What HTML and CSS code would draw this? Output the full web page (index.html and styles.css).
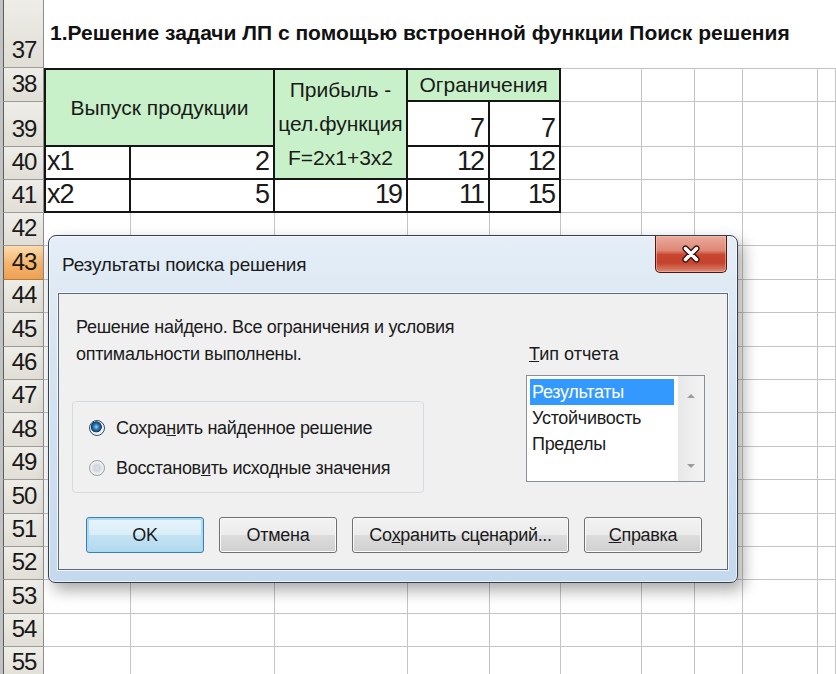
FILE: index.html
```html
<!DOCTYPE html>
<html lang="ru">
<head>
<meta charset="utf-8">
<title>Поиск решения</title>
<link rel="stylesheet" href="styles.css">
</head>
<body>
<div class="sheet">
  <div class="rh">37</div>
  <div class="title">1.Решение задачи ЛП с помощью встроенной функции Поиск решения</div>

  <div class="rh">38</div>
  <div class="t tt tl g hd span2 rows2">Выпуск продукции</div>
  <div class="t tt g hd rows3">Прибыль -<br>цел.функция<br>F=2x1+3x2</div>
  <div class="t tt g hd span2">Ограничения</div>
  <div class="c top"></div><div class="c top"></div><div class="c top"></div><div class="c top"></div><div class="c top"></div>

  <div class="rh">39</div>
  <div class="t num">7</div><div class="t num">7</div>
  <div class="c"></div><div class="c"></div><div class="c"></div><div class="c"></div><div class="c"></div>

  <div class="rh">40</div>
  <div class="t tl lab">x1</div><div class="t num">2</div>
  <div class="t num">12</div><div class="t num">12</div>
  <div class="c"></div><div class="c"></div><div class="c"></div><div class="c"></div><div class="c"></div>

  <div class="rh">41</div>
  <div class="t tl lab">x2</div><div class="t num">5</div><div class="t num">19</div>
  <div class="t num">11</div><div class="t num">15</div>
  <div class="c"></div><div class="c"></div><div class="c"></div><div class="c"></div><div class="c"></div>

  <div class="rh">42</div><div class="c"></div><div class="c"></div><div class="c"></div><div class="c"></div><div class="c"></div><div class="c"></div><div class="c"></div><div class="c"></div><div class="c"></div><div class="c"></div>
  <div class="rh sel">43</div><div class="c"></div><div class="c"></div><div class="c"></div><div class="c"></div><div class="c"></div><div class="c"></div><div class="c"></div><div class="c"></div><div class="c"></div><div class="c"></div>
  <div class="rh">44</div><div class="c"></div><div class="c"></div><div class="c"></div><div class="c"></div><div class="c"></div><div class="c"></div><div class="c"></div><div class="c"></div><div class="c"></div><div class="c"></div>
  <div class="rh">45</div><div class="c"></div><div class="c"></div><div class="c"></div><div class="c"></div><div class="c"></div><div class="c"></div><div class="c"></div><div class="c"></div><div class="c"></div><div class="c"></div>
  <div class="rh">46</div><div class="c"></div><div class="c"></div><div class="c"></div><div class="c"></div><div class="c"></div><div class="c"></div><div class="c"></div><div class="c"></div><div class="c"></div><div class="c"></div>
  <div class="rh">47</div><div class="c"></div><div class="c"></div><div class="c"></div><div class="c"></div><div class="c"></div><div class="c"></div><div class="c"></div><div class="c"></div><div class="c"></div><div class="c"></div>
  <div class="rh">48</div><div class="c"></div><div class="c"></div><div class="c"></div><div class="c"></div><div class="c"></div><div class="c"></div><div class="c"></div><div class="c"></div><div class="c"></div><div class="c"></div>
  <div class="rh">49</div><div class="c"></div><div class="c"></div><div class="c"></div><div class="c"></div><div class="c"></div><div class="c"></div><div class="c"></div><div class="c"></div><div class="c"></div><div class="c"></div>
  <div class="rh">50</div><div class="c"></div><div class="c"></div><div class="c"></div><div class="c"></div><div class="c"></div><div class="c"></div><div class="c"></div><div class="c"></div><div class="c"></div><div class="c"></div>
  <div class="rh">51</div><div class="c"></div><div class="c"></div><div class="c"></div><div class="c"></div><div class="c"></div><div class="c"></div><div class="c"></div><div class="c"></div><div class="c"></div><div class="c"></div>
  <div class="rh">52</div><div class="c"></div><div class="c"></div><div class="c"></div><div class="c"></div><div class="c"></div><div class="c"></div><div class="c"></div><div class="c"></div><div class="c"></div><div class="c"></div>
  <div class="rh">53</div><div class="c"></div><div class="c"></div><div class="c"></div><div class="c"></div><div class="c"></div><div class="c"></div><div class="c"></div><div class="c"></div><div class="c"></div><div class="c"></div>
  <div class="rh">54</div><div class="c"></div><div class="c"></div><div class="c"></div><div class="c"></div><div class="c"></div><div class="c"></div><div class="c"></div><div class="c"></div><div class="c"></div><div class="c"></div>
  <div class="rh">55</div><div class="c"></div><div class="c"></div><div class="c"></div><div class="c"></div><div class="c"></div><div class="c"></div><div class="c"></div><div class="c"></div><div class="c"></div><div class="c"></div>
</div>

<div class="dlg">
  <div class="cap">Результаты поиска решения</div>
  <div class="close">
    <svg width="20" height="18" viewBox="0 0 20 18"><path d="M4.5 3.5 L15.5 14.5 M15.5 3.5 L4.5 14.5" stroke="#3b1510" stroke-width="6.2" stroke-linecap="round" fill="none"/><path d="M4.5 3.5 L15.5 14.5 M15.5 3.5 L4.5 14.5" stroke="#ffffff" stroke-width="3.4" stroke-linecap="round" fill="none"/></svg>
  </div>
  <div class="client">
    <div class="body">
      <div class="left">
        <p class="msg">Решение найдено. Все ограничения и условия<br>оптимальности выполнены.</p>
        <div class="group">
          <div class="opt"><span class="radio on"></span><span>Сохра<u>н</u>ить найденное решение</span></div>
          <div class="opt"><span class="radio"></span><span>Восстанов<u>и</u>ть исходные значения</span></div>
        </div>
      </div>
      <div class="right">
        <div class="lbl"><u>Т</u>ип отчета</div>
        <div class="list">
          <div class="items">
            <div class="item sel">Результаты</div>
            <div class="item">Устойчивость</div>
            <div class="item">Пределы</div>
          </div>
          <div class="scroll"><span class="up"></span><span class="down"></span></div>
        </div>
      </div>
    </div>
    <div class="buttons">
      <div class="btn def">OK</div>
      <div class="btn">Отмена</div>
      <div class="btn wide">Со<u>х</u>ранить сценарий...</div>
      <div class="btn"><u>С</u>правка</div>
    </div>
  </div>
</div>
</body>
</html>
```

FILE: styles.css
```css
html, body {
  margin: 0;
  padding: 0;
  overflow: hidden;
}
body {
  width: 836px;
  height: 674px;
  position: relative;
  background: #fff;
  font-family: "Liberation Sans", Arial, sans-serif;
  color: #161616;
}

/* ---------- spreadsheet ---------- */
.sheet {
  display: grid;
  grid-template-columns: 44px 87px 144px 133px 82px 71px 81px 53px 48px 75px 18px;
  grid-template-rows: 68px 34px 45px 33px 33px repeat(14, 33.4px);
  height: 674px;
  overflow: hidden;
  background: linear-gradient(to right, #c2c2c2 0, #c2c2c2 3px, #fff 3px);
}
.rh {
  margin-left: 3px;
  background: linear-gradient(#eeede8, #e0ded5);
  border-left: 1px solid #5c5c5c;
  border-right: 1px solid #8d8d8d;
  border-bottom: 1px solid #9c9c9c;
  display: flex;
  align-items: flex-end;
  justify-content: center;
  padding-bottom: 5px;
  padding-left: 1px;
  font-size: 24px;
  line-height: 24px;
  letter-spacing: -1px;
  color: #1a1a1a;
}
.rh.sel {
  background: linear-gradient(#fbdcae, #f4b46d 55%, #efa152);
  border-bottom-color: #b87a3c;
}
.title {
  grid-column: span 10;
  display: flex;
  align-items: center;
  padding-left: 6px;
  padding-bottom: 2px;
  font-weight: bold;
  font-size: 21px;
  white-space: nowrap;
  color: #111;
}
.c {
  border-right: 1px solid #c4c4c4;
  border-bottom: 1px solid #c4c4c4;
}
.c.top {
  border-top: 1px solid #c4c4c4;
}
.t {
  border-right: 2px solid #151515;
  border-bottom: 2px solid #151515;
  display: flex;
  align-items: flex-end;
  background: #fff;
}
.tt { border-top: 2px solid #151515; }
.tl { border-left: 2px solid #151515; }
.g { background: #c9f1c9; }
.span2 { grid-column: span 2; }
.rows2 { grid-row: span 2; }
.rows3 { grid-row: span 3; }
.hd {
  align-items: center;
  justify-content: center;
  text-align: center;
  font-size: 21px;
  line-height: 34px;
  color: #1a1a1a;
}
.num, .lab {
  font-size: 27px;
  line-height: 27px;
  padding-bottom: 3px;
  color: #1a1a1a;
}
.num {
  justify-content: flex-end;
  padding-right: 5px;
  letter-spacing: -2px;
}
.lab {
  padding-left: 1px;
  letter-spacing: -1px;
}

/* ---------- dialog ---------- */
.dlg {
  position: absolute;
  left: 48px;
  top: 235px;
  width: 690px;
  height: 348px;
  box-sizing: border-box;
  border: 1px solid #34404d;
  border-radius: 8px 8px 7px 7px;
  background: linear-gradient(#e5eef7, #d6e4f2 35%, #c5d9ee);
  box-shadow: inset 0 0 0 1px rgba(255, 255, 255, 0.6), 5px 7px 16px rgba(0, 0, 0, 0.35);
  display: flex;
  flex-direction: column;
  padding: 0 9px 12px;
  font-size: 18px;
  letter-spacing: -0.3px;
  color: #1b1b1b;
}
.cap {
  height: 57px;
  flex: none;
  display: flex;
  align-items: center;
  padding-left: 4px;
  font-size: 19px;
  letter-spacing: -0.2px;
}
.close {
  position: absolute;
  top: 0;
  right: 10px;
  width: 72px;
  height: 37px;
  box-sizing: border-box;
  border: 1px solid #4a1a12;
  border-top: 0;
  border-radius: 0 0 5px 5px;
  background: linear-gradient(#eaab9d, #dd8875 40%, #c9452f 52%, #c4432e 75%, #dc8a74);
  box-shadow: inset 0 0 0 1px rgba(255, 200, 190, 0.5);
  display: flex;
  align-items: center;
  justify-content: center;
}
.client {
  flex: 1;
  background: #f0f0f0;
  border: 1px solid #5b6a7c;
  box-shadow: 0 0 0 1px rgba(255, 255, 255, 0.75);
  padding-top: 20px;
}
.body {
  display: flex;
  align-items: flex-start;
  padding-left: 13px;
}
.left {
  width: 352px;
}
.msg {
  margin: 0;
  padding-left: 4px;
  line-height: 27px;
  white-space: nowrap;
}
.group {
  margin-top: 33px;
  box-sizing: border-box;
  height: 92px;
  border: 1px solid #d6dbe0;
  border-radius: 4px;
  padding: 12px 0 0 16px;
  display: flex;
  flex-direction: column;
  gap: 12px;
}
.opt {
  display: flex;
  align-items: center;
  gap: 11px;
  height: 28px;
  white-space: nowrap;
}
.radio {
  flex: none;
  width: 16px;
  height: 16px;
  box-sizing: border-box;
  border-radius: 50%;
  border: 1px solid #9aa2ab;
  background: radial-gradient(circle, #dde0e3 0, #d2d6da 3px, #eef0f2 6px);
}
.radio.on {
  border-color: #2f4a66;
  background: radial-gradient(circle at 45% 42%, #a4dcf8 0, #3a8cc8 2px, #17507f 4.4px, #1b3c5c 5.2px, #e6ecf1 5.8px, #f7f9fa 7.5px);
}
.right {
  margin-left: 102px;
  width: 179px;
  padding-top: 27px;
}
.lbl {
  line-height: 27px;
  padding-left: 3px;
  letter-spacing: 0;
}
.list {
  margin-top: 7px;
  height: 107px;
  box-sizing: border-box;
  border: 1px solid #8a8f96;
  background: #fff;
  display: flex;
}
.items {
  flex: 1;
  padding: 3px 0 0 3px;
}
.item {
  width: 144px;
  box-sizing: border-box;
  height: 26px;
  line-height: 26px;
  padding-left: 2px;
  white-space: nowrap;
}
.item.sel {
  background: #3399ff;
  color: #fff;
}
.scroll {
  width: 26px;
  position: relative;
  background: linear-gradient(to right, #e8e8e8, #f3f3f3);
}
.up, .down {
  position: absolute;
  left: 9px;
  width: 0;
  height: 0;
  border-left: 4px solid transparent;
  border-right: 4px solid transparent;
}
.up {
  top: 18px;
  border-bottom: 4px solid #9c9c9c;
}
.down {
  top: 88px;
  border-top: 4px solid #9c9c9c;
}
.buttons {
  display: flex;
  gap: 15px;
  margin-top: 24px;
  padding-left: 27px;
}
.btn {
  width: 118px;
  height: 36px;
  box-sizing: border-box;
  border: 1px solid #707070;
  border-radius: 3px;
  background: linear-gradient(#f3f3f3, #ebebeb 50%, #dddddd 50%, #cfcfcf);
  box-shadow: inset 0 0 0 1px #fbfbfb;
  display: flex;
  align-items: center;
  justify-content: center;
  white-space: nowrap;
}
.btn.wide {
  width: 217px;
}
.btn.def {
  border-color: #3c7fb1;
  background: linear-gradient(#e8f4fb, #d9edf8 50%, #c4e3f3 50%, #b3d9ee);
  box-shadow: inset 0 0 0 2px #a9dcf4;
}
```
